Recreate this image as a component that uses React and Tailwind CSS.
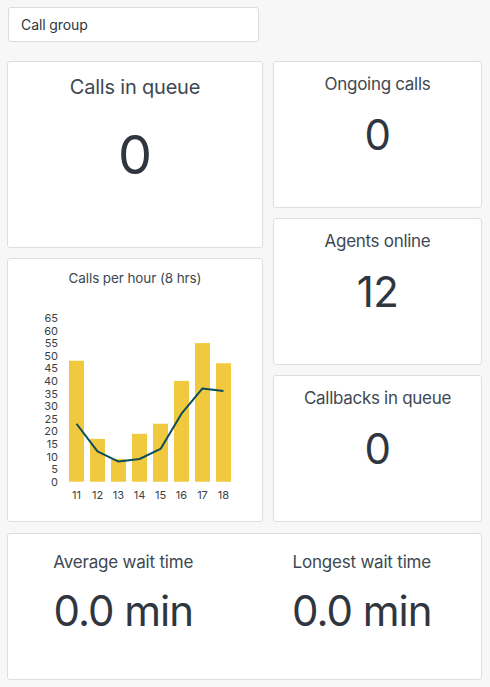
import React from "react";

const bars = [48, 17, 9, 19, 23, 40, 55, 47];
const line = [23, 12, 8, 9, 13, 27, 37, 36];
const hours = [11, 12, 13, 14, 15, 16, 17, 18];
const ticks = [65, 60, 55, 50, 45, 40, 35, 30, 25, 20, 15, 10, 5, 0];

function Chart() {
  const ox = 8;
  const oy = 300;
  const base = 482.7 - oy;
  const k = 2.52;
  const pts = line
    .map((v, i) => `${76.5 + 21 * i - ox},${base - v * k}`)
    .join(" ");
  return (
    <svg width="254" height="212" className="block" style={{ fontFamily: "Inter, sans-serif" }}>
      {ticks.map((t) => (
        <text key={t} x={58 - ox} y={base - t * k} textAnchor="end" dominantBaseline="central" fontSize="11" fill="#3a3f45">
          {t}
        </text>
      ))}
      {bars.map((v, i) => (
        <rect key={i} x={69 + 21 * i - ox} y={base - v * k} width="15" height={v * k} fill="#f0c93e" />
      ))}
      <polyline points={pts} fill="none" stroke="#0c4d5b" strokeWidth="2" strokeLinejoin="round" />
      {hours.map((h, i) => (
        <text key={h} x={76.5 + 21 * i - ox} y={495.7 - oy} textAnchor="middle" dominantBaseline="central" fontSize="11" fill="#3a3f45">
          {h}
        </text>
      ))}
    </svg>
  );
}

function StatCard({ title, value }) {
  return (
    <div className="h-[147px] bg-white border border-[#dedede] rounded-[3px] flex flex-col items-center">
      <div className="pt-[10px] text-[17px] leading-[24px] tracking-[-0.3px] text-[#3e4852]">{title}</div>
      <div className="mt-[17px] text-[42px] leading-[44px] tracking-[-0.5px] text-[#2f3640]">{value}</div>
    </div>
  );
}

export default function App() {
  return (
    <div className="w-[490px] h-[687px] bg-[#f7f7f7] px-[7px] pt-[7px]" style={{ fontFamily: "Inter, 'Noto Sans', sans-serif" }}>
      <div className="ml-[1px] w-[251px] h-[35px] bg-white border border-[#dcdcdc] rounded-[3px] flex items-center pl-[12px] text-[14px] tracking-[-0.1px] text-[#2f3640]">
        Call group
      </div>
      <div className="mt-[19px] grid grid-cols-[256px_209px] gap-[10px]">
        <div className="flex flex-col gap-[10px]">
          <div className="h-[187px] bg-white border border-[#dedede] rounded-[3px] flex flex-col items-center">
            <div className="pt-[11px] text-[20px] leading-[28px] tracking-[-0.2px] text-[#3e4852]">Calls in queue</div>
            <div className="mt-[26px] text-[54px] leading-[56px] text-[#2f3640]">0</div>
          </div>
          <div className="h-[264px] bg-white border border-[#dedede] rounded-[3px] flex flex-col">
            <div className="pt-[9px] text-center text-[13.5px] leading-[20px] tracking-[-0.1px] text-[#3e4852]">Calls per hour (8 hrs)</div>
            <div className="mt-[11px]">
              <Chart />
            </div>
          </div>
        </div>
        <div className="flex flex-col gap-[10px]">
          <StatCard title="Ongoing calls" value="0" />
          <StatCard title="Agents online" value="12" />
          <StatCard title="Callbacks in queue" value="0" />
        </div>
      </div>
      <div className="mt-[11px] w-[475px] h-[147px] bg-white border border-[#dedede] rounded-[3px] grid grid-cols-2">
        <div className="flex flex-col items-center">
          <div className="pt-[16px] text-[17px] leading-[24px] tracking-[-0.2px] text-[#3e4852] mr-[6px]">Average wait time</div>
          <div className="mt-[15px] text-[42px] leading-[44px] tracking-[-1px] text-[#2f3640] mr-[6px]">0.0 min</div>
        </div>
        <div className="flex flex-col items-center">
          <div className="pt-[16px] text-[17px] leading-[24px] tracking-[-0.2px] text-[#3e4852] mr-[2px]">Longest wait time</div>
          <div className="mt-[15px] text-[42px] leading-[44px] tracking-[-1px] text-[#2f3640] mr-[2px]">0.0 min</div>
        </div>
      </div>
    </div>
  );
}
